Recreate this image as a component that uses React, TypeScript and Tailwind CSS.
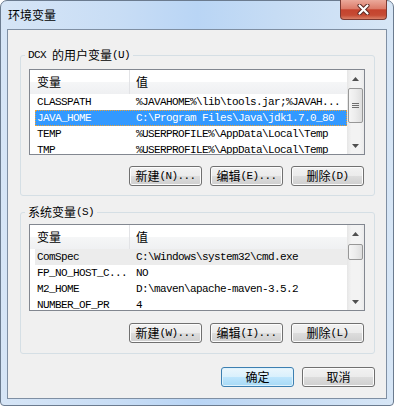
import React from "react";

// Windows 7 "环境变量" dialog. SimSun is not installed, so Latin text uses a
// 6px-advance mono and the CJK text Noto Sans CJK SC at 12px.
const CJK = "font-['Noto_Sans_CJK_SC',sans-serif] text-[12px] leading-[14px]";
const MONO = "font-['Liberation_Mono',monospace] text-[11px] tracking-[-0.6px] leading-[14px]";

type Row = { name: string; value: string; state?: "focus" | "inactive" };

const userVars: Row[] = [
  { name: "CLASSPATH", value: "%JAVAHOME%\\lib\\tools.jar;%JAVAH..." },
  { name: "JAVA_HOME", value: "C:\\Program Files\\Java\\jdk1.7.0_80", state: "focus" },
  { name: "TEMP", value: "%USERPROFILE%\\AppData\\Local\\Temp" },
  { name: "TMP", value: "%USERPROFILE%\\AppData\\Local\\Temp" },
];

const systemVars: Row[] = [
  { name: "ComSpec", value: "C:\\Windows\\system32\\cmd.exe", state: "inactive" },
  { name: "FP_NO_HOST_C...", value: "NO" },
  { name: "M2_HOME", value: "D:\\maven\\apache-maven-3.5.2" },
  { name: "NUMBER_OF_PR", value: "4" },
];

function Arrow({ down }: { down?: boolean }) {
  return (
    <svg width="7" height="4" viewBox="0 0 7 4">
      <polygon points={down ? "0,0 7,0 3.5,4" : "3.5,0 7,4 0,4"} fill="#505050" />
    </svg>
  );
}

function ScrollBar({ thumbTop, thumbHeight, grip }: { thumbTop: string; thumbHeight: string; grip?: boolean }) {
  return (
    <div className="flex w-[17px] flex-col bg-[linear-gradient(to_right,#e6e6e6,#f3f3f3_25%,#f3f3f3_75%,#ebebeb)]">
      <div className="flex h-[17px] items-center justify-center">
        <Arrow />
      </div>
      <div
        className={`${thumbTop} ${thumbHeight} mx-[1px] flex w-[15px] flex-col items-center justify-center gap-[1px] rounded-[2px] border border-[#979797] bg-[linear-gradient(to_right,#f5f5f5,#ececec_50%,#dedede)]`}
      >
        {grip ? (
          <>
            <div className="h-px w-[7px] bg-[#6e6e6e]" />
            <div className="h-px w-[7px] bg-[#6e6e6e]" />
            <div className="h-px w-[7px] bg-[#6e6e6e]" />
          </>
        ) : null}
      </div>
      <div className="flex-1" />
      <div className="flex h-[17px] items-center justify-center">
        <Arrow down />
      </div>
    </div>
  );
}

function VarList({ rows, height, thumbTop, thumbHeight, grip }: {
  rows: Row[];
  height: string;
  thumbTop: string;
  thumbHeight: string;
  grip?: boolean;
}) {
  return (
    <div className={`${height} flex border border-[#828790] bg-white`}>
      <div className="flex-1 overflow-hidden">
        <div className="flex h-[24px] bg-[linear-gradient(#ffffff_0%,#ffffff_48%,#f5f6f7_52%,#eff0f2_100%)]">
          <div className={`${CJK} flex w-[99px] items-center pl-[7px] text-black`}>变量</div>
          <div className="w-px bg-[#e2e3e6]" />
          <div className={`${CJK} flex items-center pl-[6px] text-black`}>值</div>
        </div>
        <div className="pl-[5px]">
          {rows.map((r) => (
            <div
              key={r.name}
              className={`flex h-[16px] items-center whitespace-nowrap ${
                r.state === "focus"
                  ? "bg-[#3399ff] text-white outline-1 outline-offset-[-1px] outline-dotted outline-[#f0a030]"
                  : r.state === "inactive"
                    ? "bg-[#ececec] text-black"
                    : "text-black"
              }`}
            >
              <div className={`${MONO} w-[94px] overflow-hidden pl-[2px]`}>{r.name}</div>
              <div className={`${MONO} flex-1 overflow-hidden pl-[7px]`}>{r.value}</div>
            </div>
          ))}
        </div>
      </div>
      <ScrollBar thumbTop={thumbTop} thumbHeight={thumbHeight} grip={grip} />
    </div>
  );
}

function Btn({ cjk, tail, primary }: { cjk: string; tail?: string; primary?: boolean }) {
  return (
    <button
      className={`flex h-[20px] w-[73px] items-center justify-center rounded-[3px] border text-black ${
        primary
          ? "border-[#3c7fb1] bg-[linear-gradient(#eaf6fd_0%,#d9f0fc_50%,#bee6fd_50%,#a7d9f5_100%)] shadow-[inset_0_0_0_1px_#dff2fc]"
          : "border-[#707070] bg-[linear-gradient(#f2f2f2_0%,#ebebeb_50%,#dddddd_50%,#cfcfcf_100%)] shadow-[inset_0_0_0_1px_#fcfcfc]"
      }`}
    >
      <span className={CJK}>{cjk}</span>
      {tail ? <span className={MONO}>{tail}</span> : null}
    </button>
  );
}

export default function App() {
  return (
    <div className="h-[406px] w-[394px] rounded-t-[7px] rounded-b-[4px] border border-[#6b7b8f] bg-[linear-gradient(to_right,#d6e5f6_0%,#c8ddf5_30%,#b9d5f5_50%,#c6dcf4_70%,#d7e6f6_100%)] px-[6px] pb-[6px]">
      <div className="flex h-[28px] items-start justify-between">
        <span className={`${CJK} pl-[1px] pt-[7px] text-black`}>环境变量</span>
        <div className="-mt-[1px] flex h-[20px] w-[47px] items-center justify-center rounded-b-[4px] border border-t-0 border-[#7b3a33] bg-[linear-gradient(#eba99b_0%,#dc7c6a_45%,#c4432e_52%,#c64b34_80%,#d98068_100%)]">
          <svg width="13" height="11" viewBox="0 0 13 11">
            <path d="M2.5 1.5 L10.5 9.5 M10.5 1.5 L2.5 9.5" stroke="#5a2620" strokeWidth="4" strokeLinecap="round" />
            <path d="M2.5 1.5 L10.5 9.5 M10.5 1.5 L2.5 9.5" stroke="#ffffff" strokeWidth="2.2" strokeLinecap="round" />
          </svg>
        </div>
      </div>

      <div className="flex h-[370px] flex-col border border-[#7f8fa3] bg-[#f0f0f0]">
        <fieldset className="mt-[18px] ml-[12px] mr-[11px] min-w-0 rounded-[3px] border border-[#d5dfe5]">
          <legend className="ml-[4px] flex h-[14px] items-center px-[3px] text-black">
            <span className={MONO}>DCX&nbsp;</span>
            <span className={CJK}>的用户变量</span>
            <span className={MONO}>(U)</span>
          </legend>
          <div className="pt-[7px] pr-[9px] pb-[9px] pl-[8px]">
            <VarList rows={userVars} height="h-[86px]" thumbTop="mt-[1px]" thumbHeight="h-[35px]" grip />
            <div className="mt-[11px] flex justify-end gap-[8px] pr-[1px]">
              <Btn cjk="新建" tail="(N)..." />
              <Btn cjk="编辑" tail="(E)..." />
              <Btn cjk="删除" tail="(D)" />
            </div>
          </div>
        </fieldset>

        <fieldset className="mt-[9px] ml-[12px] mr-[11px] min-w-0 rounded-[3px] border border-[#d5dfe5]">
          <legend className="ml-[4px] flex h-[14px] items-center px-[3px] text-black">
            <span className={CJK}>系统变量</span>
            <span className={MONO}>(S)</span>
          </legend>
          <div className="pt-[5px] pr-[9px] pb-[10px] pl-[8px]">
            <VarList rows={systemVars} height="h-[87px]" thumbTop="mt-[2px]" thumbHeight="h-[16px]" />
            <div className="mt-[12px] flex justify-end gap-[8px] pr-[1px]">
              <Btn cjk="新建" tail="(W)..." />
              <Btn cjk="编辑" tail="(I)..." />
              <Btn cjk="删除" tail="(L)" />
            </div>
          </div>
        </fieldset>

        <div className="mt-[13px] flex justify-end gap-[8px] pr-[11px]">
          <Btn cjk="确定" primary />
          <Btn cjk="取消" />
        </div>
      </div>
    </div>
  );
}
